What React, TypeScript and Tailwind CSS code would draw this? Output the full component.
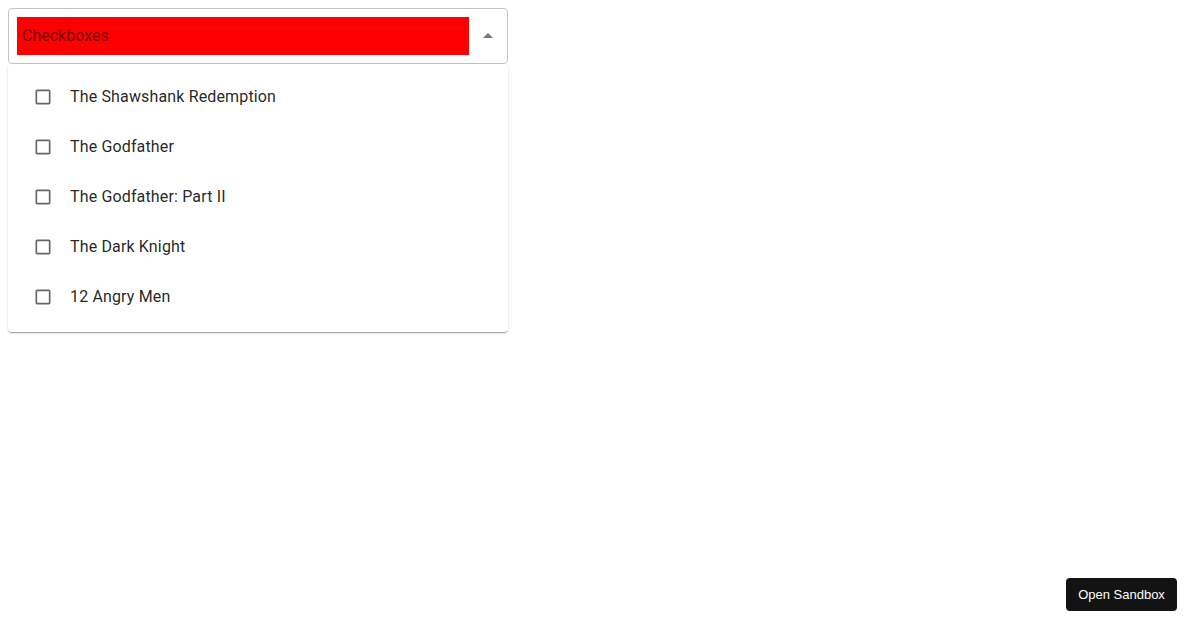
const films = [
  "The Shawshank Redemption",
  "The Godfather",
  "The Godfather: Part II",
  "The Dark Knight",
  "12 Angry Men",
];

function BoxIcon() {
  return (
    <svg viewBox="0 0 24 24" className="h-5 w-5 fill-[rgba(0,0,0,0.6)]">
      <path d="M19 5v14H5V5h14m0-2H5c-1.1 0-2 .9-2 2v14c0 1.1.9 2 2 2h14c1.1 0 2-.9 2-2V5c0-1.1-.9-2-2-2z" />
    </svg>
  );
}

export default function App() {
  return (
    <div className="min-h-[630px] bg-white p-2 font-['Roboto',sans-serif]">
      <div className="w-[500px]">
        <div className="flex h-[56px] items-center rounded border border-[#c4c4c4] pl-2">
          <div className="flex h-[38px] w-[452px] items-center bg-[#ff0000] pl-[5px] text-base text-[#7a0000]">
            Checkboxes
          </div>
          <div className="flex flex-1 items-center justify-center">
            <svg viewBox="0 0 24 24" className="h-6 w-6 fill-[rgba(0,0,0,0.54)]">
              <path d="M7 14l5-5 5 5z" />
            </svg>
          </div>
        </div>
        <ul className="rounded bg-white pt-2 pb-[10px] shadow-[0_2px_1px_-1px_rgba(0,0,0,0.2),0_1px_1px_0_rgba(0,0,0,0.14),0_1px_3px_0_rgba(0,0,0,0.12)]">
          {films.map((f) => (
            <li key={f} className="flex h-[50px] items-center pl-[25px] text-base tracking-[0.15px] text-[rgba(0,0,0,0.87)]">
              <span className="mr-[17px] flex">
                <BoxIcon />
              </span>
              {f}
            </li>
          ))}
        </ul>
      </div>
      <button className="fixed right-[23px] bottom-[19px] flex h-[33px] w-[111px] items-center justify-center rounded bg-[#131313] font-['Liberation_Sans',sans-serif] text-[13px] text-white">
        Open Sandbox
      </button>
    </div>
  );
}
